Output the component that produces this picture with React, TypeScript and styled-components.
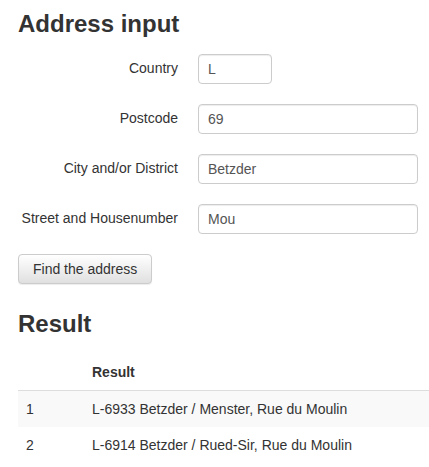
import styled, { createGlobalStyle } from 'styled-components';

const GlobalStyle = createGlobalStyle`
    * {
        box-sizing: border-box;
    }
    body {
        margin: 0;
        background: #fff;
        color: #333;
        font-family: "Liberation Sans", Arial, sans-serif;
        font-size: 14px;
        line-height: 1.428571;
    }
`;

const Page = styled.div`
    padding: 11px 0 0 18px;
`;

const Heading = styled.h3<{ $top?: number; $bottom?: number }>`
    margin: ${(p) => p.$top ?? 0}px 0 ${(p) => p.$bottom ?? 17}px;
    font-size: 24px;
    font-weight: bold;
    line-height: 1.1;
    color: #333;
`;

const Form = styled.form`
    width: 400px;
    display: flex;
    flex-direction: column;
    gap: 20px;
`;

const FormRow = styled.div`
    display: grid;
    grid-template-columns: 160px 1fr;
    column-gap: 20px;
    align-items: center;
`;

const Label = styled.label`
    text-align: right;
    font-size: 14px;
    color: #333;
    white-space: nowrap;
`;

const Input = styled.input<{ $width?: number }>`
    display: block;
    width: ${(p) => (p.$width ? `${p.$width}px` : '100%')};
    height: 30px;
    padding: 5px 9px;
    font-family: inherit;
    font-size: 14px;
    color: #555;
    background: #fff;
    border: 1px solid #ccc;
    border-radius: 4px;
    box-shadow: inset 0 1px 1px rgba(0, 0, 0, 0.075);
    outline: none;
`;

const Button = styled.button`
    align-self: flex-start;
    height: 30px;
    padding: 0 14px;
    font-family: inherit;
    font-size: 14px;
    color: #333;
    background-image: linear-gradient(to bottom, #fff 0%, #e0e0e0 100%);
    border: 1px solid #ccc;
    border-radius: 4px;
    box-shadow: inset 0 1px 0 rgba(255, 255, 255, 0.15), 0 1px 1px rgba(0, 0, 0, 0.075);
    cursor: pointer;
`;

const Table = styled.table`
    width: 100%;
    border-collapse: collapse;
    border-spacing: 0;
`;

const Th = styled.th<{ $narrow?: boolean }>`
    padding: 8px;
    line-height: 20px;
    text-align: left;
    font-weight: bold;
    border-bottom: 1px solid #ddd;
    width: ${(p) => (p.$narrow ? '66px' : 'auto')};
`;

const Row = styled.tr<{ $striped: boolean }>`
    background: ${(p) => (p.$striped ? '#f9f9f9' : 'transparent')};
    & + & td {
        border-top: 1px solid #ddd;
    }
`;

const Td = styled.td`
    padding: 8px;
    line-height: 20px;
`;

const results = [
    'L-6933 Betzder / Menster, Rue du Moulin',
    'L-6914 Betzder / Rued-Sir, Rue du Moulin',
];

export default function App() {
    return (
        <>
            <GlobalStyle />
            <Page>
                <Heading>Address input</Heading>
                <Form onSubmit={(e) => e.preventDefault()}>
                    <FormRow>
                        <Label>Country</Label>
                        <Input $width={74} defaultValue="L" />
                    </FormRow>
                    <FormRow>
                        <Label>Postcode</Label>
                        <Input defaultValue="69" />
                    </FormRow>
                    <FormRow>
                        <Label>City and/or District</Label>
                        <Input defaultValue="Betzder" />
                    </FormRow>
                    <FormRow>
                        <Label>Street and Housenumber</Label>
                        <Input defaultValue="Mou" />
                    </FormRow>
                    <Button type="submit">Find the address</Button>
                </Form>
                <Heading $top={27} $bottom={16}>Result</Heading>
                <Table>
                    <thead>
                        <tr>
                            <Th $narrow></Th>
                            <Th>Result</Th>
                        </tr>
                    </thead>
                    <tbody>
                        {results.map((r, i) => (
                            <Row key={r} $striped={i % 2 === 0}>
                                <Td>{i + 1}</Td>
                                <Td>{r}</Td>
                            </Row>
                        ))}
                    </tbody>
                </Table>
            </Page>
        </>
    );
}
